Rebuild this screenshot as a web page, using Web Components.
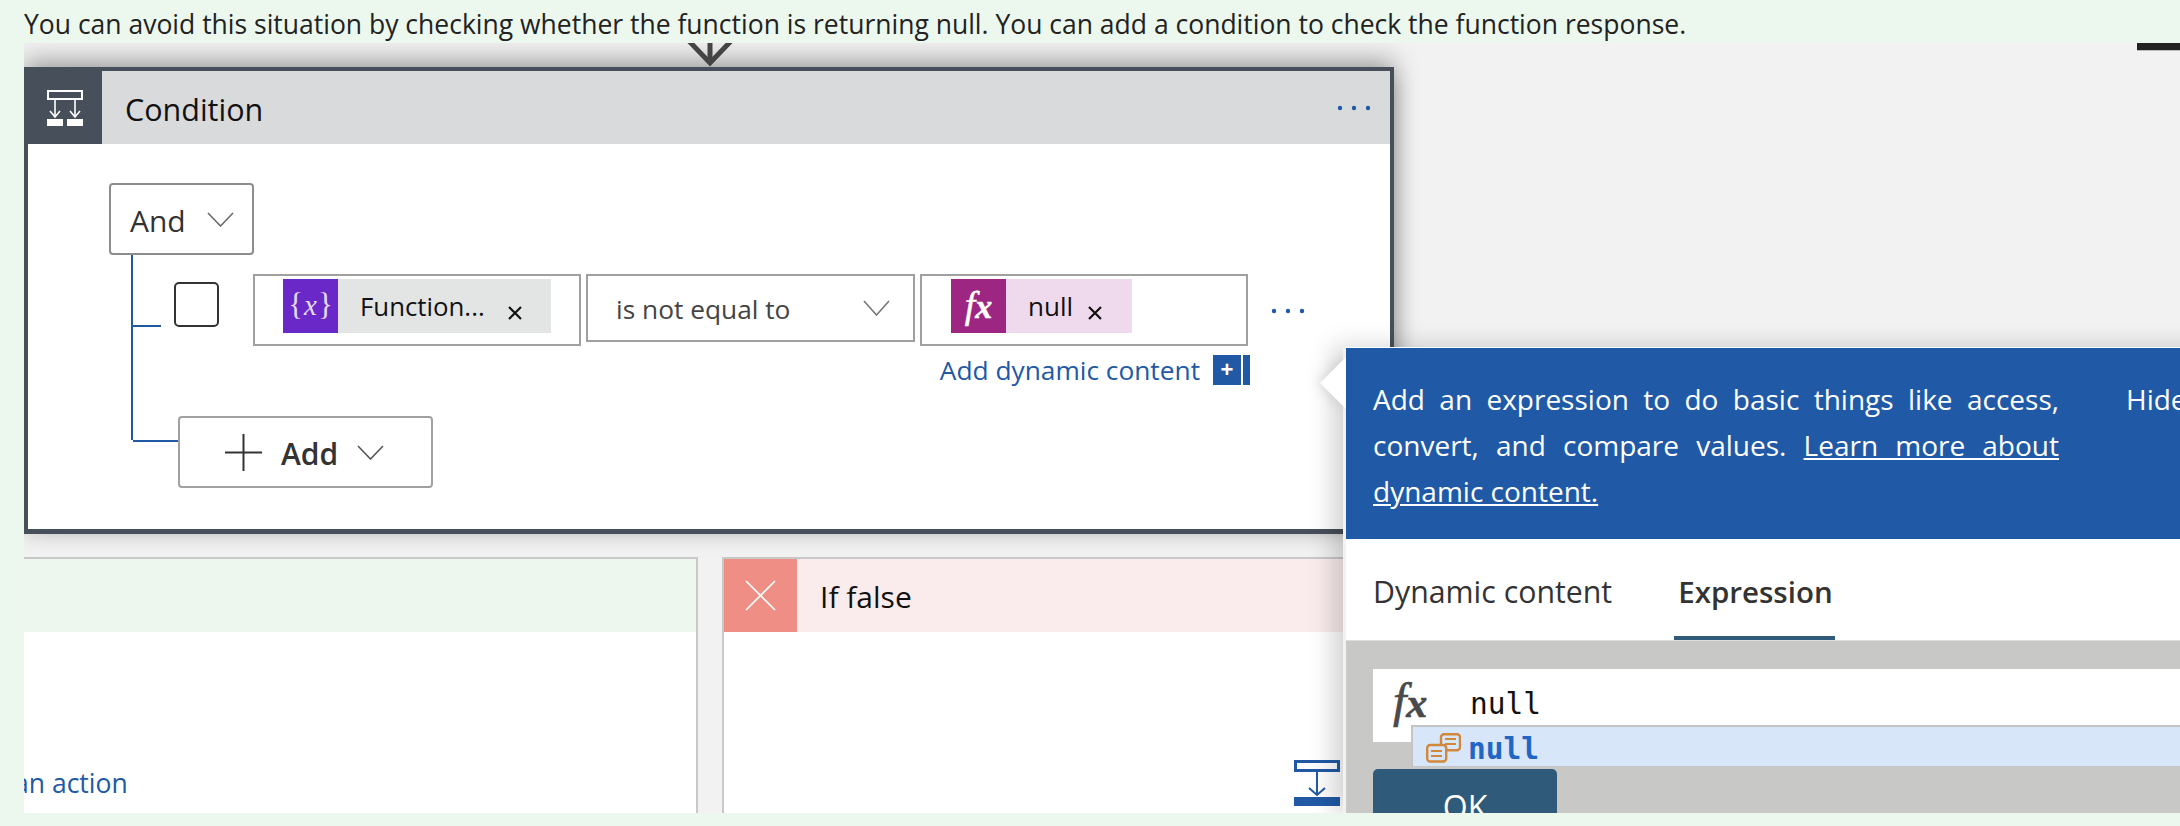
<!DOCTYPE html>
<html><head><meta charset="utf-8">
<style>
html,body{margin:0;padding:0}
body{width:2180px;height:826px;overflow:hidden;background:#ecf8ed;font-family:"Open Sans","Noto Sans",sans-serif;color:#222}
</style></head>
<body>
<flow-page>
  <flow-card>
    <flow-tree>
      <flow-token kind="var" label="Function..." slot="a"></flow-token>
      <flow-token kind="fx" label="null" slot="c"></flow-token>
    </flow-tree>
  </flow-card>
  <flow-branches></flow-branches>
  <expr-panel></expr-panel>
</flow-page>
<script>
const chev = (w,h,c='#6b6b6b',sw=1.6)=>`<svg width="${w}" height="${h}" viewBox="0 0 ${w} ${h}" style="display:block;flex:none"><polyline points="1,1 ${w/2},${h-1} ${w-1},1" fill="none" stroke="${c}" stroke-width="${sw}"/></svg>`;
const dots = (c='#2159a5')=>`<svg width="34" height="6" viewBox="0 0 34 6" style="display:block"><circle cx="3" cy="3" r="2.2" fill="${c}"/><circle cx="17" cy="3" r="2.2" fill="${c}"/><circle cx="31" cy="3" r="2.2" fill="${c}"/></svg>`;

class FlowPage extends HTMLElement{constructor(){super();this.attachShadow({mode:'open'}).innerHTML=`
<style>
:host{display:block;width:2180px;height:826px;overflow:hidden}
.note{height:43px;box-sizing:border-box;padding:9px 0 0 24px;font-size:26.5px;line-height:30px;color:#222;white-space:nowrap}
.canvas{position:relative;margin-left:24px;width:2156px;height:770px;background:#f2f2f3;overflow:hidden}
.bar{position:absolute;top:0;right:0;width:43px;height:7px;background:#222;border-bottom:1px solid #bbb}
.arrow{position:absolute;left:663px;top:0;z-index:1}
</style>
<div class="note">You can avoid this situation by checking whether the function is returning null. You can add a condition to check the function response.</div>
<div class="canvas">
  <svg class="arrow" width="46" height="24" viewBox="0 0 46 24"><polyline points="1,-3 23,20 45,-3" fill="none" stroke="#444" stroke-width="5"/><line x1="23" y1="-3" x2="23" y2="20" stroke="#444" stroke-width="5"/></svg>
  <div class="bar"></div>
  <slot></slot>
</div>`;}}
customElements.define('flow-page',FlowPage);

class FlowCard extends HTMLElement{constructor(){super();this.attachShadow({mode:'open'}).innerHTML=`
<style>
:host{display:block;box-sizing:border-box;width:1370px;height:467px;margin-top:24px;border:4px solid #474f5a;border-bottom-width:5px;background:#fff;box-shadow:0 -6px 24px rgba(0,0,0,.36),14px 0 20px -14px rgba(0,0,0,.2);position:relative}
.head{display:flex;align-items:center;height:73px;background:#d9dadc}
.ico{width:74px;height:73px;background:#474f5a;display:flex;align-items:center;justify-content:center;flex:none}
.title{margin-left:23px;font-size:30.5px;color:#111;position:relative;top:1px}
.more{margin-left:auto;margin-right:19px}
</style>
<div class="head">
  <div class="ico"><svg width="36" height="36" viewBox="0 0 36 36"><rect x="1" y="1" width="34" height="8" fill="none" stroke="#fff" stroke-width="2"/><g fill="none" stroke="#fff" stroke-width="1.6"><line x1="8" y1="9" x2="8" y2="27"/><line x1="28" y1="9" x2="28" y2="27"/><polyline points="3,21 8,27 13,21"/><polyline points="23,21 28,27 33,21"/></g><rect x="0" y="29" width="16" height="7" fill="#fff"/><rect x="20" y="29" width="16" height="7" fill="#fff"/></svg></div>
  <div class="title">Condition</div>
  <div class="more">${dots()}</div>
</div>
<slot></slot>`;}}
customElements.define('flow-card',FlowCard);

class FlowToken extends HTMLElement{constructor(){super();
const k=this.getAttribute('kind'),l=this.getAttribute('label');
const fx=k==='fx';
this.attachShadow({mode:'open'}).innerHTML=`
<style>
:host{display:flex;height:54px;background:${fx?'#efd9ec':'#e3e5e4'};width:${fx?181:268}px;margin:3px 0 0 ${fx?29:28}px}
.i{width:55px;background:${fx?'#9e2683':'#6b28c8'};color:#fff;display:flex;align-items:center;justify-content:center;font-family:"Liberation Serif",serif;flex:none}
.fx{font-size:38px;font-style:italic;-webkit-text-stroke:.5px #fff;padding-bottom:3px}
.fx b{font-size:34px}
.v{font-size:31px;color:#e4dcf7;padding-bottom:3px}
.v i{font-size:29px;margin:0 1px}
.t{font-size:${fx?26:25.8}px;color:#111;margin-left:22px;line-height:55px;white-space:nowrap;width:${fx?48:125}px;flex:none}
.x{margin:26px 0 0 ${fx?11:22}px;flex:none}
</style>
<div class="i">${fx?'<span class="fx">f<b>x</b></span>':'<span class="v">{<i>x</i>}</span>'}</div><div class="t">${l}</div>
<svg class="x" width="16" height="16" viewBox="0 0 16 16"><path d="M2 2L14 14M14 2L2 14" stroke="#111" stroke-width="2.2"/></svg>`;}}
customElements.define('flow-token',FlowToken);

class FlowTree extends HTMLElement{constructor(){super();this.attachShadow({mode:'open'}).innerHTML=`
<style>
:host{display:block;padding:39px 0 0 81px}
.and{box-sizing:border-box;width:145px;height:72px;border:2px solid #8d8d8d;border-radius:4px;display:flex;align-items:center;padding-left:19px;font-size:30px;line-height:44px;color:#333}
.and span{position:relative;top:2px}
.and svg{margin:0 0 0 auto;margin-right:18px}
.group{margin-left:22px;height:185px;border-left:2px solid #2159a5}
.row{display:flex;align-items:flex-start;padding-top:19px}
.stub{height:2px;background:#2159a5;flex:none}
.check{box-sizing:border-box;width:45px;height:45px;border:2px solid #333;border-radius:5px;margin:8px 34px 0 13px;flex:none}
.main{display:flex;flex-direction:column}
.boxes{display:flex;align-items:flex-start;gap:5px}
.box{box-sizing:border-box;width:328px;height:72px;border:2px solid #a0a0a0;background:#fff;display:flex}
.sel{height:68px;width:329px;align-items:center;padding-left:28px;font-size:26.3px;color:#444}
.sel span{position:relative;top:1px}
.sel svg{margin-left:auto;margin-right:23px}
.more{margin:34px 0 0 18px}
.dyn{display:flex;justify-content:flex-end;align-items:center;margin-top:9px;height:30px;color:#2159a5;font-size:26.3px;line-height:32px}
.plus{display:flex;margin-left:13px}
.plus b{width:28px;height:30px;background:#2159a5;color:#fff;display:flex;align-items:center;justify-content:center;font:bold 22px "Liberation Sans",sans-serif}
.plus i{width:7px;height:30px;background:#2159a5;margin-left:2px}
.addrow{display:flex;align-items:flex-start;margin-top:31px}
.add{box-sizing:border-box;width:255px;height:72px;border:2px solid #a0a0a0;border-radius:4px;background:#fff;display:flex;align-items:center;padding-left:45px;font-size:30px;font-weight:600;color:#333}
.add svg.p{margin-right:19px}
.add span.l{position:relative;top:1px}
</style>
<div class="and"><span>And</span>${chev(27,15)}</div>
<div class="group">
  <div class="row">
    <div class="stub" style="width:28px;margin-top:51px"></div>
    <div class="check"></div>
    <div class="main">
      <div class="boxes">
        <div class="box"><slot name="a"></slot></div>
        <div class="box sel"><span>is not equal to</span>${chev(27,16,'#777')}</div>
        <div class="box"><slot name="c"></slot></div>
        <div class="more">${dots()}</div>
      </div>
      <div class="dyn" style="width:997px">Add dynamic content<span class="plus"><b>+</b><i></i></span></div>
    </div>
  </div>
  <div class="addrow">
    <div class="stub" style="width:45px;margin-top:24px"></div>
    <div class="add"><svg class="p" width="37" height="37" viewBox="0 0 37 37"><path d="M18.5 0V37M0 18.5H37" stroke="#333" stroke-width="2"/></svg><span class="l">Add</span><span style="margin-left:19px">${chev(27,15,'#555')}</span></div>
  </div>
</div>`;}}
customElements.define('flow-tree',FlowTree);

class FlowBranches extends HTMLElement{constructor(){super();this.attachShadow({mode:'open'}).innerHTML=`
<style>
:host{display:flex;gap:24px;margin-top:23px;align-items:flex-start;height:260px}
.b{box-sizing:border-box;height:260px;background:#fff;border:2px solid #c8c8c8;border-bottom:0}
.l{width:674px;border-left:0;overflow:hidden}
.r{width:800px;position:relative}
.h{height:73px;display:flex;align-items:center}
.l .h{background:#edf7ee}
.r .h{background:#faecec}
.ic{width:73px;height:73px;background:#ee8e84;display:flex;align-items:center;justify-content:center;margin-right:23px}
.t{font-size:30px;color:#111;position:relative;top:1px}
.act{margin-top:136px;margin-left:-66px;font-size:26.5px;line-height:30px;color:#2159a5;white-space:nowrap}
.ins{position:absolute;left:570px;top:201px}
</style>
<div class="b l"><div class="h"></div><div class="act">Add an action</div></div>
<div class="b r"><div class="h"><div class="ic"><svg width="31" height="31" viewBox="0 0 31 31"><path d="M1 1L30 30M30 1L1 30" stroke="#fff" stroke-width="1.6"/></svg></div><div class="t">If false</div></div>
<svg class="ins" width="46" height="46" viewBox="0 0 46 46"><rect x="1.5" y="1.5" width="43" height="9" fill="#fff" stroke="#2159a5" stroke-width="3"/><g fill="none" stroke="#2159a5" stroke-width="2"><line x1="23" y1="11" x2="23" y2="35"/><polyline points="15,28 23,35 31,28"/></g><rect x="0" y="37" width="46" height="9" fill="#2159a5"/></svg>
</div>`;}}
customElements.define('flow-branches',FlowBranches);

class ExprPanel extends HTMLElement{constructor(){super();this.attachShadow({mode:'open'}).innerHTML=`
<style>
:host{position:absolute;left:1319px;top:304px;width:1000px;height:466px;background:#fff;border-left:3px solid #f2f2f2;box-sizing:border-box;box-shadow:-10px 0 24px rgba(0,0,0,.18);display:flex;flex-direction:column;padding-top:1px;z-index:2}
.beak{position:absolute;left:-26px;top:10px;width:0;height:0;border-style:solid;border-width:26px 26px 26px 0;border-color:transparent #fff transparent transparent;filter:drop-shadow(-4px 0 6px rgba(0,0,0,.1))}
.hd{height:191px;background:#205aa7;color:#fff;display:flex;box-sizing:border-box;padding:28px 0 0 27px;font-size:28px;line-height:46px;flex:none}
.msg{width:686px;flex:none}
.ln{display:block;white-space:normal;text-align:justify;text-align-last:justify}
.ln.end{text-align-last:left}
.msg a{color:#fff;text-decoration:underline}
.hide{margin-left:67px}
.tabs{height:101px;display:flex;box-sizing:border-box;padding-left:27px;font-size:30.3px;color:#333;flex:none}
.tab{height:101px;box-sizing:border-box;padding-top:30px;line-height:46px;border-bottom:4px solid transparent}
.tab.on{font-size:29.5px;font-weight:600;border-bottom-color:#305a7a;margin-left:62px;padding:30px 2px 0 4px}
.area{flex:1;background:#c8c9c6;padding:28px 0 0 27px;position:relative;border-top:1px solid #ddd;box-sizing:border-box}
.inp{height:73px;background:#fff;display:flex;align-items:flex-start;width:900px}
.f{font:italic 48px "Liberation Serif",serif;-webkit-text-stroke:.7px #4a4a4a;color:#4a4a4a;margin:4px 0 0 20px;line-height:56px;width:77px;flex:none}
.f b{font-size:42px}
.code{font:29.5px/44px "DejaVu Sans Mono",monospace;color:#111;margin-top:13px}
.sug{position:absolute;left:65px;top:84px;width:900px;height:42px;background:#d7e7f9;border-top:2px solid #c4c4c4;border-left:2px solid #c4c4c4;border-bottom:1px solid #c4c4c4;box-sizing:border-box;display:flex;align-items:center;font:bold 29.5px/34px "DejaVu Sans Mono",monospace;color:#2166c4}
.sug span{position:relative;top:2px}
.sug svg{margin:2px 7px 0 13px;flex:none}
.ok{margin-top:27px;width:184px;height:70px;border-radius:5px;background:#305a7a;color:#fff;font-size:32px;display:flex;justify-content:center;padding-top:16px;box-sizing:border-box;line-height:44px}
</style>
<div class="beak"></div>
<div class="hd"><div class="msg"><span class="ln">Add an expression to do basic things like access,</span><span class="ln">convert, and compare values. <a>Learn more about</a></span><span class="ln end"><a>dynamic content.</a></span></div><div class="hide">Hide</div></div>
<div class="tabs"><div class="tab">Dynamic content</div><div class="tab on">Expression</div></div>
<div class="area">
  <div class="inp"><div class="f">f<b>x</b></div><div class="code">null</div></div>
  <div class="sug"><svg width="35" height="30" viewBox="0 0 35 30"><g fill="#d7e7f9" stroke="#d3873a" stroke-width="2.4"><rect x="15" y="1.2" width="19" height="16" rx="3"/><rect x="1.2" y="12" width="19" height="16.5" rx="3"/></g><g stroke="#d3873a" stroke-width="2"><path d="M19 6H30M19 11H30M5 18H16M5 23H16"/></g></svg><span>null</span></div>
  <div class="ok">OK</div>
</div>`;}}
customElements.define('expr-panel',ExprPanel);
</script>
</body></html>
